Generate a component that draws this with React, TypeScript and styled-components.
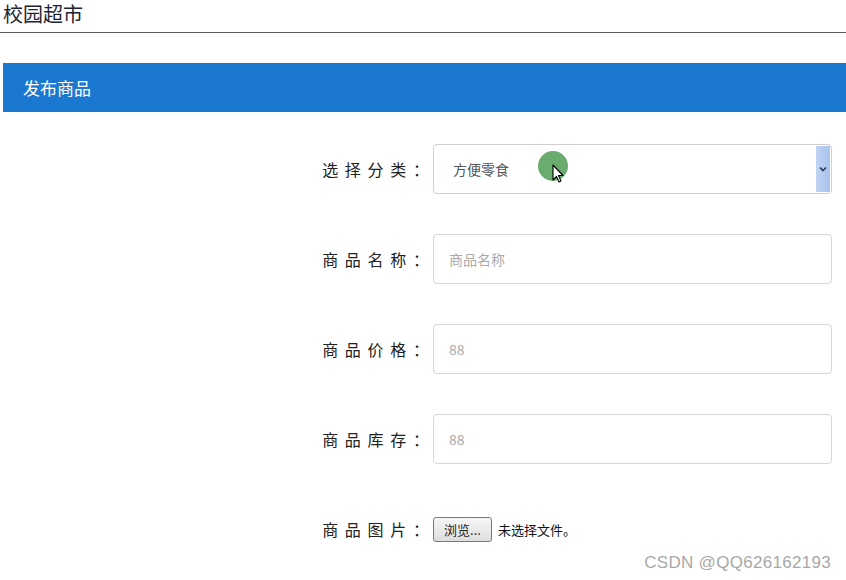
import styled, { createGlobalStyle } from 'styled-components'

const GlobalStyle = createGlobalStyle`
  html, body {
    margin: 0;
    padding: 0;
    background: #ffffff;
    font-family: "Noto Sans CJK SC", "Noto Sans", sans-serif;
    overflow: hidden;
  }
`

const fields = [
  { label: '商品名称', placeholder: '商品名称' },
  { label: '商品价格', placeholder: '88' },
  { label: '商品库存', placeholder: '88' },
]

export default function App() {
  return (
    <Page>
      <GlobalStyle />
      <Header>
        <SiteTitle>校园超市</SiteTitle>
      </Header>
      <PanelHeading>发布商品</PanelHeading>
      <Form>
        <Label>选择分类：</Label>
        <SelectWrap>
          <Select defaultValue="snack">
            <option value="snack">方便零食</option>
          </Select>
          <SelectArrow>
            <svg width="8" height="6" viewBox="0 0 8 6">
              <path d="M1 1.5 L4 4.5 L7 1.5" fill="none" stroke="#2b3a55" strokeWidth="1.6" />
            </svg>
          </SelectArrow>
          <Cursor>
            <svg width="40" height="40" viewBox="0 0 40 40">
              <circle cx="15" cy="15" r="15" fill="#6aab6e" />
              <path
                d="M15 14 L15 29 L18.5 25.5 L21 31 L23 30 L20.5 24.5 L25 24.5 Z"
                fill="#fff"
                stroke="#000"
                strokeWidth="1.1"
                strokeLinejoin="round"
              />
            </svg>
          </Cursor>
        </SelectWrap>

        {fields.map((f) => (
          <Row key={f.label}>
            <Label>{f.label}：</Label>
            <Input placeholder={f.placeholder} />
          </Row>
        ))}

        <Label>商品图片：</Label>
        <FileField>
          <FileButton type="button">浏览...</FileButton>
          <FileStatus>未选择文件。</FileStatus>
        </FileField>
      </Form>
      <Watermark>CSDN @QQ626162193</Watermark>
    </Page>
  )
}

const Page = styled.div`
  position: relative;
  width: 846px;
  height: 580px;
`

const Header = styled.div`
  height: 32px;
  padding-left: 3px;
  border-bottom: 1px solid #5a5a5a;
  display: flex;
  align-items: center;
`

const SiteTitle = styled.h1`
  margin: 0;
  font-size: 20px;
  font-weight: 400;
  color: #1e2433;
  line-height: 1;
  margin-top: -5px;
`

const PanelHeading = styled.div`
  margin: 30px 0 0 3px;
  height: 49px;
  padding-left: 20px;
  display: flex;
  align-items: center;
  background: #1a78d1;
  color: #ffffff;
  font-size: 17px;
`

const Form = styled.div`
  display: grid;
  grid-template-columns: 429px 399px;
  column-gap: 4px;
  row-gap: 40px;
  padding-top: 32px;
  align-items: center;
`

const Row = styled.div`
  display: contents;
`

const Label = styled.label`
  text-align: right;
  font-size: 16px;
  letter-spacing: 6.7px;
  margin-right: -6.7px;
  color: #222;
  line-height: 50px;
`

const SelectWrap = styled.div`
  position: relative;
  height: 50px;
`

const Select = styled.select`
  appearance: none;
  box-sizing: border-box;
  width: 100%;
  height: 50px;
  padding: 0 19px;
  border: 1px solid #d0d0d0;
  border-radius: 4px;
  background: #ffffff;
  font-family: inherit;
  font-size: 14px;
  color: #555;
  outline: none;
`

const SelectArrow = styled.span`
  position: absolute;
  top: 2px;
  right: 2px;
  bottom: 2px;
  width: 14px;
  display: flex;
  align-items: center;
  justify-content: center;
  background: linear-gradient(to right, #bfd3f3, #a9c3ee);
  pointer-events: none;
`

const Cursor = styled.span`
  position: absolute;
  left: 105px;
  top: 7px;
  pointer-events: none;
`

const Input = styled.input`
  box-sizing: border-box;
  width: 100%;
  height: 50px;
  padding: 0 15px;
  border: 1px solid #d6d6d6;
  border-radius: 4px;
  font-family: inherit;
  font-size: 14px;
  color: #555;
  outline: none;

  &::placeholder {
    color: #aaa;
  }
`

const FileField = styled.div`
  display: flex;
  align-items: center;
  gap: 6px;
  height: 50px;
`

const FileButton = styled.button`
  box-sizing: border-box;
  width: 59px;
  height: 25px;
  padding: 0;
  border: 1px solid #6f7a88;
  border-radius: 3px;
  background: linear-gradient(#f6f6f6, #dedede);
  font-family: inherit;
  font-size: 13px;
  color: #222;
`

const FileStatus = styled.span`
  font-size: 13px;
  color: #111;
`

const Watermark = styled.div`
  position: absolute;
  right: 15px;
  bottom: 7px;
  font-family: "Liberation Sans", Arial, sans-serif;
  font-size: 17px;
  color: #a8a8a8;
  letter-spacing: 0.3px;
`
